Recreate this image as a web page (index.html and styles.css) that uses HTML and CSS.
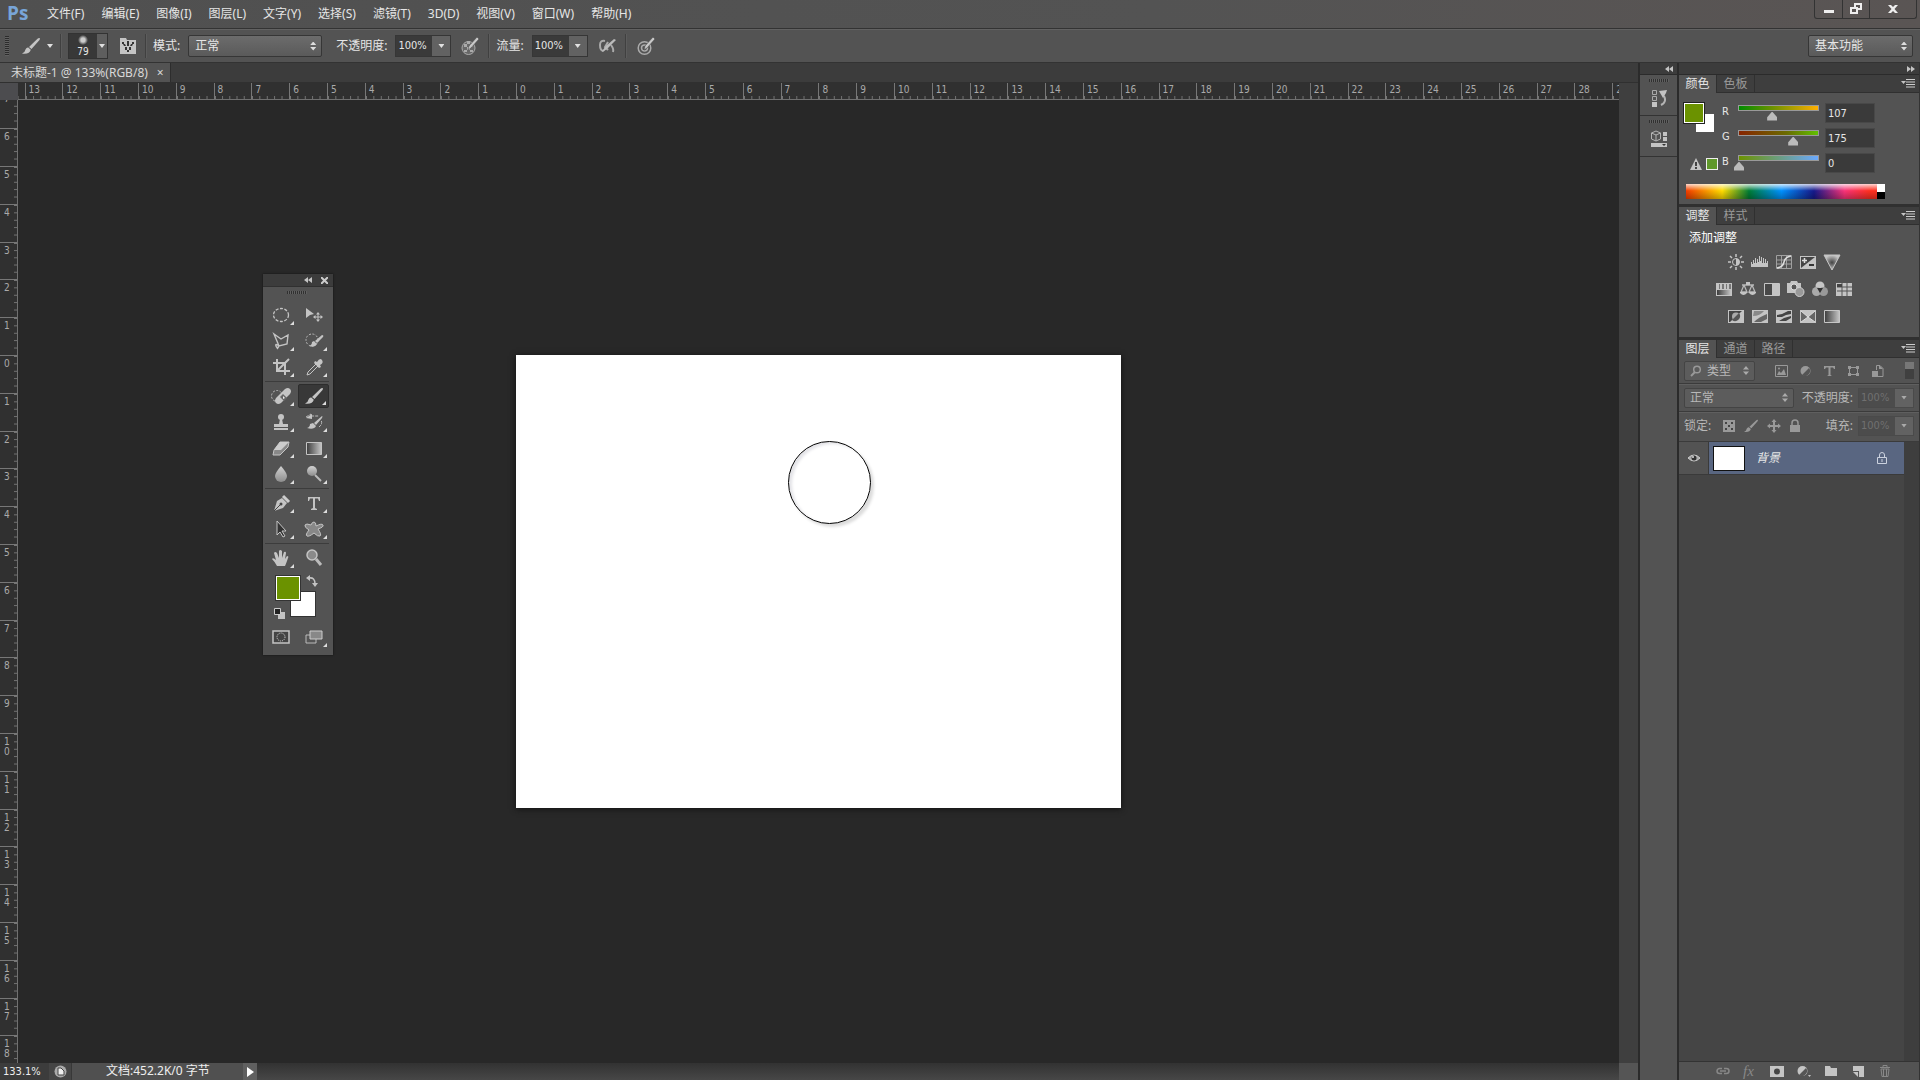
FILE: index.html
```html
<!DOCTYPE html>
<html lang="zh-CN">
<head>
    <meta charset="UTF-8">
    <meta name="viewport" content="width=device-width, initial-scale=1.0">
    <title>未标题-1 @ 133%(RGB/8)</title>
    <link rel="stylesheet" href="styles.css">
</head>
<body>
    <!-- Icones partagées -->
    <svg class="defs" width="0" height="0">
        <defs>
            <linearGradient id="fade" x1="0" x2="1" y1="0" y2="0"><stop offset="0" stop-color="#3c3c3c"/><stop offset="1" stop-color="#c6c6c6"/></linearGradient>
            <linearGradient id="fadeDown" x1="0" x2="0" y1="0" y2="1"><stop offset="0" stop-color="#d2d2d2"/><stop offset="1" stop-color="#8d8d8d"/></linearGradient>
            <radialGradient id="soft"><stop offset="0" stop-color="#444"/><stop offset="1" stop-color="#c6c6c6"/></radialGradient>
        </defs>
        <symbol id="brush" viewBox="0 0 20 18"><path d="M18.500 1 Q19.500 1.500 18.500 3 L10.500 12 8 10 16.500 1.800 Q17.800.6 18.500 1Z"/><path d="M7.300 10.500 9.800 12.800 Q8.500 17.500 1 16.500 Q4 15.500 4.500 12.500 Q5.500 10.200 7.300 10.500Z"/></symbol>
        <symbol id="menu-lines" viewBox="0 0 14 9"><path d="M0 2h5L2.500 5z"/><path d="M5 .5h9M5 3h9M5 5.500h9M5 8h9" stroke="currentColor"/></symbol>
        <symbol id="lefts" viewBox="0 0 8 6"><path d="M4 0v6L0 3zM8 0v6L4 3z"/></symbol>
        <symbol id="rights" viewBox="0 0 8 6"><path d="M0 0v6l4-3zM4 0v6l4-3z"/></symbol>
        <symbol id="move4" viewBox="0 0 14 14"><path d="M7 0l2.500 3H8v3h3V4.500L14 7l-3 2.500V8H8v3h1.500L7 14l-2.500-3H6V8H3v1.500L0 7l3-2.500V6h3V3H4.500z"/></symbol>
    </svg>

    <header class="menubar">
        <span class="logo">Ps</span>
        <nav>
            <a href="#">文件(F)</a>
            <a href="#">编辑(E)</a>
            <a href="#">图像(I)</a>
            <a href="#">图层(L)</a>
            <a href="#">文字(Y)</a>
            <a href="#">选择(S)</a>
            <a href="#">滤镜(T)</a>
            <a href="#">3D(D)</a>
            <a href="#">视图(V)</a>
            <a href="#">窗口(W)</a>
            <a href="#">帮助(H)</a>
        </nav>
        <div class="window-buttons">
            <button aria-label="最小化"><svg width="12" height="12"><path d="M1 7h10v3H1z"/></svg></button>
            <button aria-label="还原"><svg width="12" height="12"><path d="M4 0h8v7H8v4H0V4h4zM6 2v2h2v1h2V2zM2 6v3h4V6z" fill-rule="evenodd"/></svg></button>
            <button aria-label="关闭"><svg width="12" height="12"><path d="M1 2h3l2 2 2-2h3L7.500 6l3.500 4H8L6 8l-2 2H1l3.500-4z"/></svg></button>
        </div>
    </header>

    <section class="options">
        <span class="grip-v"></span>
        <button class="tool-preset" aria-label="画笔"><svg width="20" height="18"><use href="#brush"/></svg><i class="caret"></i></button>
        <span class="sep"></span>
        <button class="brush-size"><span class="tip">79</span><span class="drop"><i class="caret"></i></span></button>
        <button class="icon brush-panel" aria-label="画笔面板"><svg width="16" height="18"><path d="M0 1h6l1 2h9v14H0z"/><path d="M2 5h2v2H2zM7 4h2v3H7zM12 5h2v2h-2zM3 7h2l1 2H4zM7 7h2v2H7zM11 7h2l-1 2h-2zM5 10h2v3H5zM9 10h2v3H9zM7 13h2v2H7z" fill="#333"/></svg></button>
        <span class="sep"></span>
        <label for="mode">模式:</label>
        <span class="select mode"><select id="mode"><option>正常</option></select></span>
        <label for="opacity">不透明度:</label>
        <span class="percent"><input id="opacity" value="100%"><button aria-label="不透明度选项"><i class="caret"></i></button></span>
        <button class="icon" aria-label="压力控制不透明度"><svg width="18" height="20"><circle cx="7.500" cy="12" r="6.500" fill="#686868" stroke="#aaa"/><path d="M3 8h3v3H3zM9 8h3v3H9zM6 11h3v3H6zM3 14h3v2H3zM9 14h3v2H9zM6 5h3v3H6z" fill="#aaa"/><path d="M16 1l2 2-8 9-3 2 1-4z" fill="#c8c8c8" stroke="#4b4b4b" stroke-width=".6"/></svg></button>
        <span class="sep"></span>
        <label for="flow">流量:</label>
        <span class="percent"><input id="flow" value="100%"><button aria-label="流量选项"><i class="caret"></i></button></span>
        <button class="icon" aria-label="喷枪"><svg width="18" height="20"><path d="M7 5Q2 4 2 9t3 6M10 14l-3-3 3-5M13 9q3 4 2 7" fill="none" stroke="#aaa" stroke-width="2"/><path d="M16 3l2 1-8 8-5 4-1-1 4-5z" fill="#bbb"/></svg></button>
        <span class="sep"></span>
        <button class="icon" aria-label="压力控制大小"><svg width="18" height="20"><circle cx="7.500" cy="12" r="6.300" fill="none" stroke="#aaa" stroke-width="1.500"/><circle cx="7.500" cy="12" r="3" fill="none" stroke="#aaa" stroke-width="1.500"/><path d="M16 1l2 2-8 9-3 2 1-4z" fill="#c8c8c8" stroke="#4b4b4b" stroke-width=".6"/></svg></button>
        <span class="select workspace"><select aria-label="工作区"><option>基本功能</option></select></span>
    </section>

    <main>
        <section class="document">
            <div class="tabs">
                <div class="tab"><span>未标题-1 @ 133%(RGB/8)</span><button aria-label="关闭">×</button></div>
            </div>
            <div class="viewport">
                <div class="corner"></div>
                <div class="ruler ruler-h"><div class="track" id="rulerH"></div></div>
                <div class="ruler ruler-v"><div class="track" id="rulerV"></div></div>
                <div class="stage">
                    <div class="paper"><div class="cursor"></div></div>
                </div>
                <div class="scroll-v"></div>
            </div>
            <footer class="status">
                <input class="zoom" aria-label="缩放" value="133.1%">
                <button class="bridge" aria-label="预览"><svg width="13" height="13"><circle cx="6.500" cy="6.500" r="6" fill="#aaa"/><path d="M4 3h3l3 3v4H4z" fill="#eee" stroke="#444"/></svg></button>
                <span class="doc-size">文档:452.2K/0 字节</span>
                <button class="play" aria-label="状态栏选项"><svg width="7" height="10"><path d="M0 0l7 5-7 5z"/></svg></button>
                <div class="scroll-h"></div>
                <span class="scroll-corner"></span>
            </footer>
        </section>

        <aside class="dock">
            <div class="dock-head"><svg width="8" height="6"><use href="#lefts"/></svg></div>
            <div class="dock-item"><span class="grip"></span><button aria-label="历史记录"><svg width="16" height="18"><path d="M1.500 1.500h4v4h-4zM1.500 7.500h4v4h-4z" fill="none" stroke="#aaa"/><path d="M1 13h5v5H1z" fill="#c4c4c4"/><path d="M10 16q6-3 3-9" fill="none" stroke="#b4b4b4" stroke-width="2"/><path d="M8 2l8-1-1 3-3 5z"/></svg></button></div>
            <div class="dock-item"><span class="grip"></span><button aria-label="属性"><svg width="16" height="18"><path d="M5 1l4.500 2v6L5 11 .5 9V3zM.5 3L5 5l4.500-2M5 5v6" fill="none" stroke="#b4b4b4"/><path d="M12 2h4v4h-4zM12 7h4v4h-4zM0 13h16v4H0z"/><path d="M11 14h4l-2 2z" fill="#333"/></svg></button></div>
        </aside>

        <aside class="panels">
            <div class="panels-head"><svg width="8" height="6"><use href="#rights"/></svg></div>

            <section class="panel">
                <div class="panel-tabs"><button class="current">颜色</button><button>色板</button><svg class="panel-menu" width="14" height="9"><use href="#menu-lines"/></svg></div>
                <div class="color-body">
                    <div class="color-left">
                        <div class="pair"><span class="fg"></span><span class="bg"></span></div>
                        <div class="gamut"><svg width="12" height="12"><path d="M6 0l6 12H0z"/><path d="M6 4v4M6 9v2" stroke="#444" stroke-width="2"/></svg><span></span></div>
                    </div>
                    <div class="channels">
                        <div class="channel"><label for="r">R</label><div class="slider slider-r"><input type="range" aria-label="R" min="0" max="255" value="107"></div><input id="r" value="107"></div>
                        <div class="channel"><label for="g">G</label><div class="slider slider-g"><input type="range" aria-label="G" min="0" max="255" value="175"></div><input id="g" value="175"></div>
                        <div class="channel"><label for="b">B</label><div class="slider slider-b"><input type="range" aria-label="B" min="0" max="255" value="0"></div><input id="b" value="0"></div>
                    </div>
                    <div class="spectrum"><div class="hues"></div><div class="ends"></div></div>
                </div>
            </section>

            <section class="panel">
                <div class="panel-tabs"><button class="current">调整</button><button>样式</button><svg class="panel-menu" width="14" height="9"><use href="#menu-lines"/></svg></div>
                <div class="adjust-body">
                    <p>添加调整</p>
                    <div class="adjust-row">
                        <svg width="18" height="16"><circle cx="9" cy="8" r="3.500" fill="none" stroke="#c6c6c6"/><path d="M9 4.500a3.500 3.500 0 0 1 0 7z"/><path d="M9 0v3M9 13v3M1 8h3M14 8h3M3 2l2 2M13 12l2 2M3 14l2-2M13 4l2-2" stroke="#c6c6c6" stroke-width="1.500"/></svg>
                        <svg width="18" height="16"><path d="M0 13V8h1v2h1V6h1v3h1V4h1v5h1V5h1v3h1V2h1v5h1V3h1v6h1V4h1v5h1V5h1v4h1V7h1v6z"/></svg>
                        <svg width="18" height="16"><path d="M1.500 1.500h15v13h-15zM6.500 1v14M11.500 1v14M1 6h16M1 10h16" fill="none" stroke="#a0a0a0"/><path d="M2 14Q8 13 9 8t7-6" fill="none" stroke="#ddd" stroke-width="1.500"/></svg>
                        <svg width="18" height="16"><path d="M1 2h16v13H1z"/><path d="M2 14V3h14z" fill="#444"/><path d="M5.500 4v5M3 6.500h5" stroke="#ddd" stroke-width="1.500"/><path d="M10 11h5" stroke="#333" stroke-width="2"/></svg>
                        <svg width="18" height="16"><path d="M1 1h16L9 16z" fill="url(#soft)" stroke="#c6c6c6"/></svg>
                    </div>
                    <div class="adjust-row">
                        <svg width="18" height="16"><path d="M1 2h16v13H1z"/><path d="M4 3h1v5H4zM7 3h2v5H7zM11 3h1v5h-1zM14 3h2v5h-2z" fill="#777"/><path d="M2 9h14v5H2z" fill="url(#fade)"/></svg>
                        <svg width="18" height="16"><path d="M9 1v3M3 4h12M5 4l-3 7h6L5 4M13 4l-3 7h6l-3-7" fill="none" stroke="#b8b8b8" stroke-width="1.300"/><path d="M1 11h7v1q-3.500 4-7 0zM10 11h7v1q-3.500 4-7 0zM7 1h4v3H7z"/></svg>
                        <svg width="18" height="16"><path d="M1.500 2.500h15v12h-15z" fill="#484848" stroke="#c6c6c6"/><path d="M9 3h7v11H9z"/></svg>
                        <svg width="18" height="16"><path d="M0 2h3l1-2h6l1 2h3v10H0z"/><circle cx="7" cy="6" r="3" fill="#555" stroke="#ddd"/><circle cx="12.500" cy="11" r="4.500" fill="#999" stroke="#d0d0d0"/></svg>
                        <svg width="18" height="16"><circle cx="9" cy="5" r="4.500" fill="#c6c6c6"/><circle cx="5.500" cy="10.500" r="4.500" fill="#aaa"/><circle cx="12.500" cy="10.500" r="4.500" fill="#999"/><path d="M6 7h6l-3 5z" fill="#333"/></svg>
                        <svg width="18" height="16"><path d="M1 2h16v13H1z"/><path d="M2 6h15M2 10h15M7 2v13M12 2v13" stroke="#555"/><path d="M2 3h5v3H2z" fill="#444"/></svg>
                    </div>
                    <div class="adjust-row">
                        <svg width="18" height="16"><path d="M1 2h16v13H1z"/><path d="M2 3h13L3 14H2z" fill="#444"/><circle cx="9" cy="8.500" r="4" fill="#aaa"/><path d="M12 5L5 12A5 5 0 0 0 12 5z" fill="#555"/></svg>
                        <svg width="18" height="16"><path d="M1 2h16v13H1z"/><path d="M2 8Q9 8 13 3H3z" fill="#888"/><path d="M3 14q5-5 13-8v5l-6 3z" fill="#666"/></svg>
                        <svg width="18" height="16"><path d="M1 2h16v13H1z"/><path d="M2 7l5-1 6-3h3v3l-5 1-4 2H2zM4 13l5-3 7-2v2l-5 3z" fill="#444"/></svg>
                        <svg width="18" height="16"><path d="M1 2h16v13H1z"/><path d="M2 3l7 6-7 5zM16 3L9 9l7 5z" fill="#666"/><path d="M2 3l7 6 7-6M2 14l7-5 7 5" fill="none" stroke="#ddd"/></svg>
                        <svg width="18" height="16"><path d="M1.500 2.500h15v12h-15z" fill="url(#fade)" stroke="#c6c6c6"/></svg>
                    </div>
                </div>
            </section>

            <section class="panel layers">
                <div class="panel-tabs"><button class="current">图层</button><button>通道</button><button>路径</button><svg class="panel-menu" width="14" height="9"><use href="#menu-lines"/></svg></div>
                <div class="layer-row filter">
                    <span class="select kind"><svg width="12" height="12"><circle cx="7" cy="4.500" r="3.300" fill="none" stroke="#999" stroke-width="1.500"/><path d="M5 7l-4 4" stroke="#999" stroke-width="2"/></svg><select aria-label="滤镜类型"><option>类型</option></select></span>
                    <div class="filter-icons">
                        <svg width="13" height="12"><path d="M.5.5h12v11H.5z" fill="none" stroke="#999"/><path d="M2 10l2-4 2 2 3-4 2 6z"/><circle cx="4" cy="3.500" r="1"/></svg>
                        <svg width="13" height="12"><circle cx="6.500" cy="6" r="5"/><path d="M10 3A5 5 0 0 1 3 10z" fill="#555"/></svg>
                        <svg width="13" height="12"><path d="M1 1h11v3h-1l-1-1.500H7.500V10L9 11H4l1.500-1V2.500H3L2 4H1z"/></svg>
                        <svg width="13" height="12"><path d="M2.500 2.500h8v7h-8z" fill="none" stroke="#999"/><path d="M1 1h3v3H1zM9 1h3v3H9zM1 8h3v3H1zM9 8h3v3H9z"/></svg>
                        <svg width="13" height="12"><path d="M5.500 5V.500H9l3 3v8H7" fill="none" stroke="#999"/><path d="M1 6h6v6H1zM8 0l4 4H8z"/></svg>
                    </div>
                    <button class="switch" aria-label="打开或关闭图层过滤"></button>
                </div>
                <div class="layer-row">
                    <span class="select blend"><select aria-label="混合模式"><option>正常</option></select></span>
                    <label class="push" for="layer-opacity">不透明度:</label>
                    <span class="percent off"><input id="layer-opacity" value="100%" disabled><button aria-label="图层不透明度选项"><i class="caret"></i></button></span>
                </div>
                <div class="layer-row last">
                    <span class="lock-label">锁定:</span>
                    <div class="locks">
                        <svg width="12" height="12"><path d="M0 0h12v12H0z"/><path d="M2 2h2v2H2zM8 2h2v2H8zM5 5h2v2H5zM2 8h2v2H2zM8 8h2v2H8z" fill="#444"/></svg>
                        <svg width="16" height="14"><use href="#brush"/></svg>
                        <svg width="14" height="14"><use href="#move4"/></svg>
                        <svg width="12" height="14"><path d="M3 6V4a3 3 0 0 1 6 0v2" fill="none" stroke="#999" stroke-width="1.500"/><path d="M1 6h10v7H1z"/></svg>
                    </div>
                    <label class="push" for="fill">填充:</label>
                    <span class="percent off"><input id="fill" value="100%" disabled><button aria-label="填充选项"><i class="caret"></i></button></span>
                </div>
                <div class="layer-list">
                    <div class="layer">
                        <button class="eye" aria-label="可见性"><svg width="14" height="10"><path d="M1 5q6-6 12 0-6 6-12 0z" fill="#aaa" stroke="#ccc"/><circle cx="7" cy="5" r="2.500" fill="#333"/><circle cx="6" cy="4" r="1" fill="#ddd"/></svg></button>
                        <div class="layer-main"><span class="thumb"></span><em>背景</em><svg width="12" height="14"><path d="M3.500 6V4a2.500 2.500 0 0 1 5 0v2M1.500 6.500h9v6h-9zM6 8v3" fill="none" stroke="#ccd2df"/></svg></div>
                    </div>
                </div>
                <div class="layer-actions">
                    <svg class="off" width="14" height="12"><path d="M6 3.500H3.500a2.500 2.500 0 0 0 0 5H6M8 3.500h2.500a2.500 2.500 0 0 1 0 5H8M4 6h6" fill="none" stroke="#888" stroke-width="1.500"/></svg>
                    <span class="fx">fx</span>
                    <svg width="14" height="12"><path d="M0 1h14v11H0z"/><circle cx="7" cy="6.500" r="3" fill="#444"/></svg>
                    <svg width="14" height="12"><circle cx="5.500" cy="6" r="5"/><path d="M9 3A5 5 0 0 1 2 10z" fill="#555"/><path d="M11 10h3l-1.500 2z"/></svg>
                    <svg width="14" height="12"><path d="M1 1h5l1 2h6v8H1z"/></svg>
                    <svg width="14" height="12"><path d="M2 1h11v11H8V6H2z"/><path d="M2 7h5v5z"/></svg>
                    <svg class="off" width="14" height="12"><path d="M2 2.500h10M5 2V.500h4V2M3 4h8l-1 7.500H4zM5.500 4v7M8.500 4v7" fill="none" stroke="#888"/></svg>
                </div>
            </section>
        </aside>
    </main>

    <section class="toolbox">
        <div class="toolbox-head"><svg width="8" height="6"><use href="#lefts"/></svg><svg width="7" height="7"><path d="M0 0l7 7M7 0L0 7" stroke="#ccc" stroke-width="2"/></svg></div>
        <span class="grip"></span>
        <div class="tools">
            <button class="more" aria-label="椭圆选框"><svg width="20" height="20"><ellipse cx="10" cy="10" rx="7.500" ry="6.500" fill="none" stroke="#c4c4c4" stroke-width="1.300" stroke-dasharray="3 1.500"/></svg></button>
            <button aria-label="移动"><svg width="20" height="20"><path d="M2 3l8 6-4 1-4 3z"/><path d="M14 7l2 2.500h-1.500v2h2V10l2.500 2-2.500 2v-1.500h-2v2H16L14 17l-2-2.500h1.500v-2h-2V14L9 12l2.500-2v1.500h2v-2H12z"/></svg></button>
            <button class="more" aria-label="多边形套索"><svg width="20" height="20"><path d="M3 3l7 5 7-4-1 9-8 2zM8 15q-4-3-3 0t3 0l-2 3" fill="none" stroke="#c4c4c4" stroke-width="1.400"/></svg></button>
            <button class="more" aria-label="快速选择"><svg width="20" height="20"><circle cx="8" cy="9" r="6" fill="none" stroke="#bbb" stroke-dasharray="2 1.500"/><path d="M18 4q2 0 1 2l-6 6-2-2zM10 10l3 3q-2 4-8 2 3-1 3-4z"/></svg></button>
            <button class="more" aria-label="裁剪"><svg width="20" height="20"><path d="M6 2v12h13M2 6h12v12M7 13l11-11" fill="none" stroke="#c4c4c4" stroke-width="2"/></svg></button>
            <button class="more" aria-label="吸管"><svg width="20" height="20"><path d="M12 7l2 2-8 8-3 1 1-3z" fill="#555" stroke="#c4c4c4"/><path d="M13 5q3-5 5-2t-2 5l1 2-2 1-5-5 1-2z"/></svg></button>
            <hr>
            <button class="more" aria-label="修复画笔"><svg width="20" height="20"><circle cx="6" cy="10" r="5.500" fill="none" stroke="#bbb" stroke-dasharray="2 1.500"/><path d="M14 3q3-2 5 0t0 5l-9 9q-3 2-5 0t0-5z"/><path d="M12 8l4 4-3 3-4-4z" fill="#666"/><path d="M12 10l2 2-2 1z" fill="#eee"/></svg></button>
            <button class="more current" aria-label="画笔"><svg width="20" height="18"><use href="#brush"/></svg></button>
            <button class="more" aria-label="仿制图章"><svg width="20" height="20"><circle cx="10" cy="5" r="3"/><path d="M9 7h2l1 5h5v3H3v-3h5zM3 16h14v2H3z"/></svg></button>
            <button class="more" aria-label="历史记录画笔"><svg width="20" height="20"><path d="M18 4q1 0 0 2l-6 7-2-2zM9 11l3 3q-2 4-9 2 3-1 3-4z"/><path d="M2 5l5-3v2h8M15 15q4-3 2-7" fill="none" stroke="#bbb" stroke-dasharray="3 1"/><path d="M2 6l6-4v5z"/></svg></button>
            <button class="more" aria-label="橡皮擦"><svg width="20" height="20"><path d="M9 4h9l-1 5-8 8H2l1-5z" fill="#888" stroke="#c4c4c4"/><path d="M9 4h9l-8 8H3z" fill="#ccc"/></svg></button>
            <button class="more" aria-label="渐变"><svg width="20" height="20"><path d="M2.500 4.500h15v12h-15z" fill="url(#fade)" stroke="#c4c4c4"/></svg></button>
            <button class="more" aria-label="模糊"><svg width="20" height="20"><path d="M10 2q6 7 6 10a6 6 0 0 1-12 0q0-3 6-10z" fill="url(#fadeDown)"/></svg></button>
            <button class="more" aria-label="减淡"><svg width="20" height="20"><circle cx="8" cy="7" r="5" fill="url(#fadeDown)"/><path d="M11 11l6 6" stroke="#bbb" stroke-width="2"/></svg></button>
            <hr>
            <button class="more" aria-label="钢笔"><svg width="20" height="20"><path d="M11 5l5 5-4 5-9 3 3-10z"/><path d="M12 3l6 6" stroke="#ccc" stroke-width="3"/><path d="M3 18l7-7" stroke="#444"/><circle cx="10" cy="11" r="1.500" fill="#444"/></svg></button>
            <button class="more" aria-label="文字"><svg width="20" height="20"><path d="M4 4h12v4h-1l-1-2.500h-3V15l2 1v1H7v-1l2-1V5.500H6L5 8H4z"/></svg></button>
            <button class="more" aria-label="路径选择"><svg width="20" height="20"><path d="M6 2l9 10h-4l3 5-2 1-3-5-3 3z" fill="#333" stroke="#c4c4c4"/></svg></button>
            <button class="more" aria-label="自定形状"><svg width="20" height="20"><path d="M10 3q2 0 2 4 6-3 7-1t-5 4q4 6 2 7t-6-3q-5 4-7 3t2-6q-5-3-4-5t6 0q1-3 3-3z" fill="#888" stroke="#c4c4c4"/></svg></button>
            <hr>
            <button class="more" aria-label="抓手"><svg width="20" height="20"><path d="M6 18q-2-4-5-7 1-2 4 1L3 5q1-2 3 0l2 5V3q1-2 3 0v7l2-6q2-1 2 1l-1 6 2-3q2 0 1 2-2 6-3 8z"/></svg></button>
            <button aria-label="缩放"><svg width="20" height="20"><circle cx="8" cy="7" r="5" fill="#8a8a8a" stroke="#c4c4c4" stroke-width="1.500"/><path d="M12 11l5 6" stroke="#bbb" stroke-width="3"/></svg></button>
        </div>
        <div class="swatches">
            <span class="fg"></span><span class="bg"></span>
            <svg class="swap" width="12" height="12"><path d="M3 3q6-1 6 6" fill="none" stroke="#c4c4c4" stroke-width="1.500"/><path d="M0 3l4-3v6zM6 8h6l-3 4z"/></svg>
            <svg class="reset" width="11" height="11"><path d="M4 4h7v7H4z"/><path d="M.5.5h6v6h-6z" fill="#222" stroke="#ccc"/></svg>
        </div>
        <div class="modes">
            <button aria-label="快速蒙版"><svg width="18" height="14"><path d="M1 1h16v12H1z" fill="#444" stroke="#c4c4c4" stroke-width="1.500"/><circle cx="9" cy="7" r="4" fill="none" stroke="#ddd" stroke-dasharray="1 1"/></svg></button>
            <button class="more" aria-label="屏幕模式"><svg width="18" height="14"><path d="M1 5h10v8H1z" fill="#555" stroke="#bbb"/><path d="M5 1h12v8H5z" fill="#888" stroke="#ccc"/></svg></button>
        </div>
    </section>

    <script src="rulers.js"></script>
</body>
</html>
```

FILE: styles.css
```css
* { margin: 0; padding: 0; box-sizing: border-box; }

body {
    display: flex;
    flex-direction: column;
    height: 100vh;
    overflow: hidden;
    background: #535353;
    color: #e6e6e6;
    font-family: "Noto Sans", "Noto Sans CJK SC", sans-serif;
    font-size: 12px;
    line-height: 16px;
}

button, input, select {
    font: inherit;
    color: inherit;
    background: none;
    border: none;
    border-radius: 0;
    outline: none;
}

svg { display: block; fill: #c4c4c4; flex: none; }
.defs { position: absolute; }

/* Barre de menus */
.menubar {
    display: flex;
    height: 29px;
    border-bottom: 1px solid #333;
    background: linear-gradient(90deg, #505050, #535353 60%, #5a5554);
}

.logo {
    width: 39px;
    padding-left: 7px;
    color: #78a5d8;
    font: bold 19px/27px "Open Sans", sans-serif;
}

nav { display: flex; align-items: center; gap: 1px; }
nav a { padding: 0 8px; color: #e6e6e6; text-decoration: none; white-space: nowrap; }

.window-buttons { display: flex; height: 19px; margin-left: auto; margin-right: 3px; border: 1px solid #333; border-top: 0; border-radius: 0 0 3px 3px; }
.window-buttons button { display: grid; place-items: center; width: 27px; }
.window-buttons button + button { border-left: 1px solid #333; }
.window-buttons button:last-child { width: 47px; }
.window-buttons svg { fill: #eee; }

/* Barre d'options */
.options {
    display: flex;
    align-items: center;
    height: 34px;
    padding: 0 7px 0 5px;
    border-top: 1px solid #626262;
    border-bottom: 1px solid #333;
    background: #535353;
}

.grip-v { width: 4px; height: 20px; background: repeating-linear-gradient(#2c2c2c 0 1px, #606060 1px 2px); }
.sep { width: 2px; height: 24px; border-left: 1px solid #404040; border-right: 1px solid #5c5c5c; }
.caret { display: block; width: 6px; height: 4px; background: #e0e0e0; clip-path: polygon(0 0, 100% 0, 50% 100%); }
.tool-preset { display: flex; align-items: center; gap: 6px; margin: 0 7px 0 12px; }
.icon { display: block; margin: 0 9px 0 10px; }
.brush-panel { margin: 0 9px 0 12px; }

.brush-size { display: flex; height: 26px; margin-left: 6px; border: 1px solid #333; font: 10px/12px "DejaVu Sans Condensed", sans-serif; }
.tip { width: 28px; padding-top: 12px; background: radial-gradient(circle at 50% 6px, #ccc 0 2px, transparent 5px) #383838; }
.drop { display: grid; place-items: center; width: 10px; background: #5e5e5e; }

.select { display: inline-flex; align-items: center; height: 22px; padding-right: 5px; border: 1px solid #363636; border-radius: 2px; background: linear-gradient(#6c6c6c, #5a5a5a); }
.select select { flex: 1; min-width: 0; height: 20px; padding-left: 6px; appearance: none; }
.select::after { content: ""; width: 6px; height: 9px; background: #ddd; clip-path: polygon(50% 0, 100% 40%, 0 40%, 0 60%, 100% 60%, 50% 100%, 0 60%, 0 40%); }
.mode { width: 134px; margin: 0 8px; }
.options label { padding-left: 6px; }
.workspace { width: 105px; margin-left: auto; }

.percent { display: inline-flex; height: 22px; margin-left: 8px; border: 1px solid #363636; font: 11px/20px "DejaVu Sans Condensed", sans-serif; }
.percent input { width: 36px; padding-left: 2px; background: #3a3a3a; }
.percent button { display: grid; place-items: center; width: 18px; background: #626262; }

/* Zone principale */
main { display: flex; flex: 1; min-height: 0; }
.document { display: flex; flex-direction: column; flex: 1; min-width: 0; }
.tabs { display: flex; height: 20px; background: #3c3c3c; border-bottom: 1px solid #303030; }
.tab { display: flex; align-items: center; gap: 9px; padding: 1px 6px 0 11px; background: #535353; border-right: 1px solid #2d2d2d; color: #d8d8d8; }
.tab button { line-height: 14px; }

.viewport { display: grid; grid-template: 17px 1fr / 18px 1fr 19px; flex: 1; min-height: 0; background: #282828; }
.corner { background: #4c4c4f; }
.ruler { overflow: hidden; background: #303030; color: #aaa; font: 10px/10px "DejaVu Sans Condensed", sans-serif; }
.ruler-h { border-bottom: 1px solid #707070; }
.ruler-v { grid-row: 2; border-right: 1px solid #707070; }
.track { display: flex; }
.ruler-h .track { width: max-content; height: 16px; margin-left: -69px; }
.ruler-v .track { flex-direction: column; margin-top: -123px; }

/* Cinq unités de règle par groupe */
.group { display: grid; flex: none; }
.ruler-h .group { grid-template-columns: repeat(5, 1fr); width: 189px; }
.ruler-v .group { grid-template-rows: repeat(5, 1fr); height: 189px; }
.ruler-h .unit { padding: 2px 0 0 3px; border-left: 1px solid #777; background: linear-gradient(90deg, #777 1px, transparent 1px) 0 100% / 20% 3px repeat-x; }
.ruler-v .unit { padding: 3px 0 0 4px; border-top: 1px solid #777; background: linear-gradient(#777 1px, transparent 1px) 100% 0 / 3px 20% repeat-y; }
.ruler-v .unit span { display: block; width: 6px; overflow-wrap: anywhere; }

.stage { display: grid; place-items: center; grid-row: 2; grid-column: 2; }
.paper { position: relative; width: 605px; height: 453px; background: #fff; box-shadow: 0 1px 6px #111; }
.cursor { position: absolute; left: 272px; top: 86px; width: 83px; height: 83px; border: 1px solid #000; border-radius: 50%; box-shadow: 3px 3px 3px #ddd, inset 3px 2px 3px #e4e4e8; }
.scroll-v { grid-row: 1 / 3; grid-column: 3; background: #3f3f3f; }

.status { display: flex; height: 17px; background: #454545; color: #eee; font: 11px/16px "DejaVu Sans Condensed", "Noto Sans CJK SC", sans-serif; }
.zoom { width: 49px; padding-left: 3px; background: #3c3c3c; }
.bridge { display: grid; place-items: center; width: 23px; border-right: 1px solid #383838; }
.doc-size { width: 171px; padding-left: 34px; background: #505050; white-space: nowrap; font-family: "Noto Sans", "Noto Sans CJK SC", sans-serif; font-size: 12px; }
.play { display: grid; place-items: center; width: 14px; background: #606060; }
.play svg { fill: #fff; }
.scroll-h { flex: 1; background: linear-gradient(#323232, #474747); }
.scroll-corner { width: 19px; background: #555; }

/* Colonne d'icones */
.dock { width: 41px; border: solid #2b2b2b; border-width: 0 2px 0 2px; background: #535353; }
.dock-head, .panels-head { display: flex; align-items: center; justify-content: flex-end; height: 12px; padding-right: 4px; background: #3c3c3c; border-bottom: 1px solid #2b2b2b; }
.dock-item { display: grid; justify-items: center; gap: 7px; height: 41px; padding-top: 4px; border-bottom: 1px solid #333; align-content: start; }
.dock-item button { display: block; }
.grip { width: 20px; height: 3px; background: repeating-linear-gradient(90deg, #303030 0 1px, #606060 1px 2px); }

/* Panneaux */
.panels { display: flex; flex-direction: column; width: 241px; border-right: 1px solid #333; }
.panels-head { flex: none; }
.panel { border-bottom: 3px solid #303030; background: #535353; }
.panel-tabs { display: flex; height: 18px; background: #3e3e3e; border-bottom: 1px solid #303030; color: #999; }
.panel-tabs button { width: 38px; line-height: 18px; border-right: 1px solid #303030; }
.panel-tabs .current { height: 18px; background: #535353; color: #e6e6e6; }
.panel-menu { margin: 4px 4px 0 auto; color: #ccc; }

.color-body { display: grid; grid-template-columns: 40px 1fr; padding: 10px 0 5px 5px; }
.color-left { display: flex; flex-direction: column; justify-content: space-between; }
.pair { position: relative; height: 30px; }
.pair .fg { position: absolute; z-index: 1; width: 20px; height: 20px; border: 1px solid #fff; outline: 1px solid #222; background: #6b9200; }
.pair .bg { position: absolute; left: 12px; top: 11px; width: 18px; height: 18px; background: #fff; }
.gamut { display: flex; gap: 4px; padding: 0 0 3px 6px; }
.gamut span { width: 12px; height: 12px; border: 1px solid #eee; background: #60982b; }
.channels { display: grid; gap: 5px; margin-left: -2px; }
.channel { display: grid; grid-template-columns: 16px 81px 50px; height: 20px; font: 11px/18px "DejaVu Sans Condensed", sans-serif; }
.channel > input { width: 50px; height: 20px; margin-left: 6px; padding-left: 2px; border: 1px solid #484848; background: #3a3a3a; }
.slider { height: 6px; margin-top: 2px; border: 1px solid #999; }
.slider-r { background: linear-gradient(90deg, #008c00, #6b9200 42%, #ffaf00); }
.slider-g { background: linear-gradient(90deg, #872400, #6b6b00 60%, #60c000); }
.slider-b { background: linear-gradient(90deg, #6b9200, #6ba9ff); }
.slider input { display: block; width: 89px; height: 10px; margin: 5px -5px 0; appearance: none; }
.slider input::-webkit-slider-thumb { appearance: none; width: 10px; height: 9px; background: #bbb; clip-path: polygon(50% 0, 100% 65%, 100% 100%, 0 100%, 0 65%); }
.spectrum { display: flex; grid-column: 1 / 3; width: 199px; height: 15px; margin: 11px 0 0 2px; }
.hues { flex: 1; background: linear-gradient(#fffc, transparent 45%, #0004), linear-gradient(90deg, #f33c00, #ffdc00 19%, #007d35 33%, #0091ff 50%, #16198b 67%, #f83378 83%, #ff3021 96%); }
.ends { width: 8px; background: linear-gradient(#fff 50%, #000 50%); }

.adjust-body { height: 112px; padding: 3px 10px; color: #fff; }
.adjust-body p { line-height: 20px; }
.adjust-row { display: flex; justify-content: center; gap: 6px; height: 16px; margin: 6px 30px 11px 0; }

.layers { display: flex; flex-direction: column; flex: 1; min-height: 0; border-bottom: 0; }
.layers .panel-tabs { flex: none; }
.layer-row { display: flex; align-items: center; flex: none; height: 28px; padding: 0 5px 0 5px; border-bottom: 1px solid #3b3b3b; box-shadow: 0 1px #5f5f5f; color: #b8b8b8; }
.layer-row.filter { height: 26px; }
.layer-row.last { height: 30px; padding-bottom: 2px; }
.layer-row svg { fill: #999; }
.layer-row .select { height: 20px; border-color: #444; background: #5c5c5c; }
.layer-row .select::after { background: #aaa; }
.layer-row .select.kind { width: 71px; padding-left: 5px; }
.layer-row .select select { height: 18px; padding-left: 5px; }
.filter-icons { display: flex; gap: 11px; margin-left: 20px; }
.switch { width: 9px; height: 17px; margin-left: auto; background: linear-gradient(#777 7px, #404040 7px); }
.blend { width: 110px; }
.push { margin-left: auto; }
.off.percent { height: 20px; margin-left: 5px; line-height: 18px; border-color: #4a4a4a; color: #707070; }
.off.percent input { background: #4c4c4c; }
.off .caret { background: #aaa; }
.locks { display: flex; align-items: center; gap: 8px; margin-left: 12px; }
.layer-list { flex: 1; min-height: 0; padding-right: 15px; background: linear-gradient(90deg, #454545 calc(100% - 15px), #3e3e3e 0); }
.layer { display: flex; height: 33px; border-bottom: 1px solid #3a3a3a; }
.eye { display: grid; place-items: center; width: 30px; background: #535353; border-right: 1px solid #3a3a3a; }
.layer-main { display: flex; align-items: center; flex: 1; padding: 0 16px 0 4px; background: #596681; }
.layer-main svg { margin-left: auto; }
.thumb { width: 32px; height: 25px; margin-right: 11px; border: 1px solid #111; background: #fff; }
.layer-actions { display: flex; align-items: center; flex: none; gap: 13px; height: 19px; padding-left: 37px; border-top: 1px solid #333; }
.fx { width: 14px; color: #888; font: italic 15px/14px "Liberation Serif", serif; }

/* Palette d'outils flottante */
.toolbox { position: absolute; left: 263px; top: 274px; width: 70px; background: #535353; box-shadow: 0 0 2px #111; }
.toolbox-head { display: flex; align-items: center; justify-content: flex-end; gap: 9px; height: 13px; padding-right: 5px; background: #3c3c3c; border-bottom: 1px solid #303030; }
.toolbox .grip { display: block; width: 20px; margin: 4px auto 9px 24px; }
.tools { display: grid; grid-template-columns: 31px 31px; gap: 2px; padding-left: 2px; }
.tools button, .modes button { position: relative; display: grid; place-items: center; height: 24px; }
.tools hr { grid-column: 1 / 3; height: 1px; border: 0; background: #3c3c3c; }
.tools .current { background: #383838; border: 1px solid #2d2d2d; border-radius: 2px; }
.more::after { content: ""; position: absolute; right: 2px; bottom: 2px; width: 4px; height: 4px; background: #ddd; clip-path: polygon(100% 0, 100% 100%, 0 100%); }
.swatches { position: relative; height: 50px; margin-top: 5px; }
.swatches .fg { position: absolute; z-index: 1; left: 13px; top: 1px; width: 24px; height: 24px; border: 1px solid #fff; outline: 1px solid #333; background: #6b9200; }
.swatches .bg { position: absolute; left: 28px; top: 17px; width: 24px; height: 24px; background: #fff; outline: 1px solid #333; }
.swap { position: absolute; left: 43px; top: 0; }
.reset { position: absolute; left: 11px; top: 33px; }
.modes { display: grid; grid-template-columns: 31px 31px; gap: 2px; padding: 0 0 6px 2px; }
```

FILE: rulers.js
```js
// Graduations : seules les unités entre first et last portent un nombre
function buildRuler(id, from, to, first, last) {
    const track = document.getElementById(id);
    for (let start = from; start < to; start += 5) {
        const group = document.createElement("div");
        group.classList.add("group");
        for (let i = start; i < start + 5; i++) {
            const label = i >= first && i <= last ? Math.abs(i) : "";
            group.innerHTML += `<div class="unit"><span>${label}</span></div>`;
        }
        track.appendChild(group);
    }
}

buildRuler("rulerH", -15, 45, -13, 29);
buildRuler("rulerV", -10, 25, -7, 18);
```
